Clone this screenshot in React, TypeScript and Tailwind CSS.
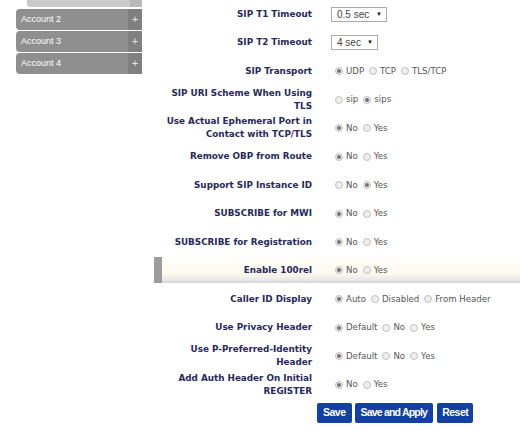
import React from "react";

type Row = {
  label: string[];
  kind: "select" | "radio";
  options?: string[];
  checked?: number;
  value?: string;
  width?: string;
  highlight?: boolean;
};

const rows: Row[] = [
  { label: ["SIP T1 Timeout"], kind: "select", value: "0.5 sec", width: "w-[56px]" },
  { label: ["SIP T2 Timeout"], kind: "select", value: "4 sec", width: "w-[47px]" },
  { label: ["SIP Transport"], kind: "radio", options: ["UDP", "TCP", "TLS/TCP"], checked: 0 },
  { label: ["SIP URI Scheme When Using", "TLS"], kind: "radio", options: ["sip", "sips"], checked: 1 },
  { label: ["Use Actual Ephemeral Port in", "Contact with TCP/TLS"], kind: "radio", options: ["No", "Yes"], checked: 0 },
  { label: ["Remove OBP from Route"], kind: "radio", options: ["No", "Yes"], checked: 0 },
  { label: ["Support SIP Instance ID"], kind: "radio", options: ["No", "Yes"], checked: 1 },
  { label: ["SUBSCRIBE for MWI"], kind: "radio", options: ["No", "Yes"], checked: 0 },
  { label: ["SUBSCRIBE for Registration"], kind: "radio", options: ["No", "Yes"], checked: 0 },
  { label: ["Enable 100rel"], kind: "radio", options: ["No", "Yes"], checked: 0, highlight: true },
  { label: ["Caller ID Display"], kind: "radio", options: ["Auto", "Disabled", "From Header"], checked: 0 },
  { label: ["Use Privacy Header"], kind: "radio", options: ["Default", "No", "Yes"], checked: 0 },
  { label: ["Use P-Preferred-Identity", "Header"], kind: "radio", options: ["Default", "No", "Yes"], checked: 0 },
  { label: ["Add Auth Header On Initial", "REGISTER"], kind: "radio", options: ["No", "Yes"], checked: 0 },
];

function Radio({ on }: { on: boolean }) {
  return (
    <span className="w-[8px] h-[8px] rounded-full border border-[#c2c2c2] bg-[#eeeeee] flex items-center justify-center shrink-0">
      {on && <span className="w-[4px] h-[4px] rounded-full bg-[#727272]" />}
    </span>
  );
}

function Control({ row }: { row: Row }) {
  if (row.kind === "select") {
    return (
      <div
        className={`${row.width} h-[15px] border border-[#ababab] bg-white flex items-center justify-between pl-[5px] pr-[4px] text-[10px] text-[#444] font-['Liberation_Sans',Arial,sans-serif]`}
      >
        <span>{row.value}</span>
        <span className="text-[6px] text-[#111]">▼</span>
      </div>
    );
  }
  return (
    <div className="ml-[4px] flex items-center gap-[5px] text-[8.6px] text-[#555] font-['DejaVu_Sans',sans-serif]">
      {row.options!.map((o, i) => (
        <label key={o} className="flex items-center gap-[3px]">
          <Radio on={i === row.checked} />
          <span>{o}</span>
        </label>
      ))}
    </div>
  );
}

function Account({ name }: { name: string }) {
  return (
    <div className="flex h-[21px] mb-[1px] rounded-l-[4px] overflow-hidden bg-[#8f8f8f]">
      <div className="flex-1 pl-[5px] flex items-center text-[9px] text-white font-['Liberation_Sans',Arial,sans-serif]">
        {name}
      </div>
      <div className="w-[14px] bg-[#808080] flex items-center justify-center text-[11px] text-[#e6e6e6] font-['Liberation_Sans',Arial,sans-serif]">
        +
      </div>
    </div>
  );
}

const btn =
  "h-[20px] bg-[#1340a3] rounded-[2px] text-white font-bold text-[10.5px] font-['Liberation_Sans',Arial,sans-serif]";

export default function App() {
  return (
    <div className="w-[520px] h-[431px] bg-white overflow-hidden flex">
      {/* side menu */}
      <div className="w-[154px] shrink-0 pl-[16px] pr-[12px]">
        <div className="flex h-[7px] ml-[11px] mb-[2px] rounded-bl-[3px] overflow-hidden bg-[#cacaca]">
          <div className="flex-1" />
          <div className="w-[12px] bg-[#b9b9b9]" />
        </div>
        <Account name="Account 2" />
        <Account name="Account 3" />
        <Account name="Account 4" />
      </div>

      {/* settings table */}
      <div className="flex-1 flex flex-col">
        {rows.map((row) => (
          <div key={row.label.join(" ")} className="h-[28.5px] shrink-0 flex items-start">
            <div
              className={
                row.highlight
                  ? "w-full h-[26px] mt-[0.5px] flex items-center border-l-[8px] border-[#9c9c9c] bg-[linear-gradient(to_bottom,#fffefb_0%,#fcf9ee_65%,#ebebeb_85%,#d6d6d6_100%)]"
                  : "w-full h-full flex items-center"
              }
            >
              <div
                className={`${row.highlight ? "w-[150px]" : "w-[158px]"} shrink-0 text-right text-[8.8px] leading-[13px] font-bold text-[#28285c] font-['DejaVu_Sans',Verdana,sans-serif]`}
              >
                {row.label.map((l) => (
                  <div key={l}>{l}</div>
                ))}
              </div>
              <div className="ml-[19px]">
                <Control row={row} />
              </div>
            </div>
          </div>
        ))}
        <div className="flex gap-[3px] pl-[163px] mt-[4px]">
          <button className={`${btn} px-[6px] tracking-[-0.5px]`}>Save</button>
          <button className={`${btn} px-[6px] tracking-[-0.8px]`}>Save and Apply</button>
          <button className={`${btn} px-[5px] tracking-[-0.5px] ml-[1px]`}>Reset</button>
        </div>
      </div>
    </div>
  );
}
